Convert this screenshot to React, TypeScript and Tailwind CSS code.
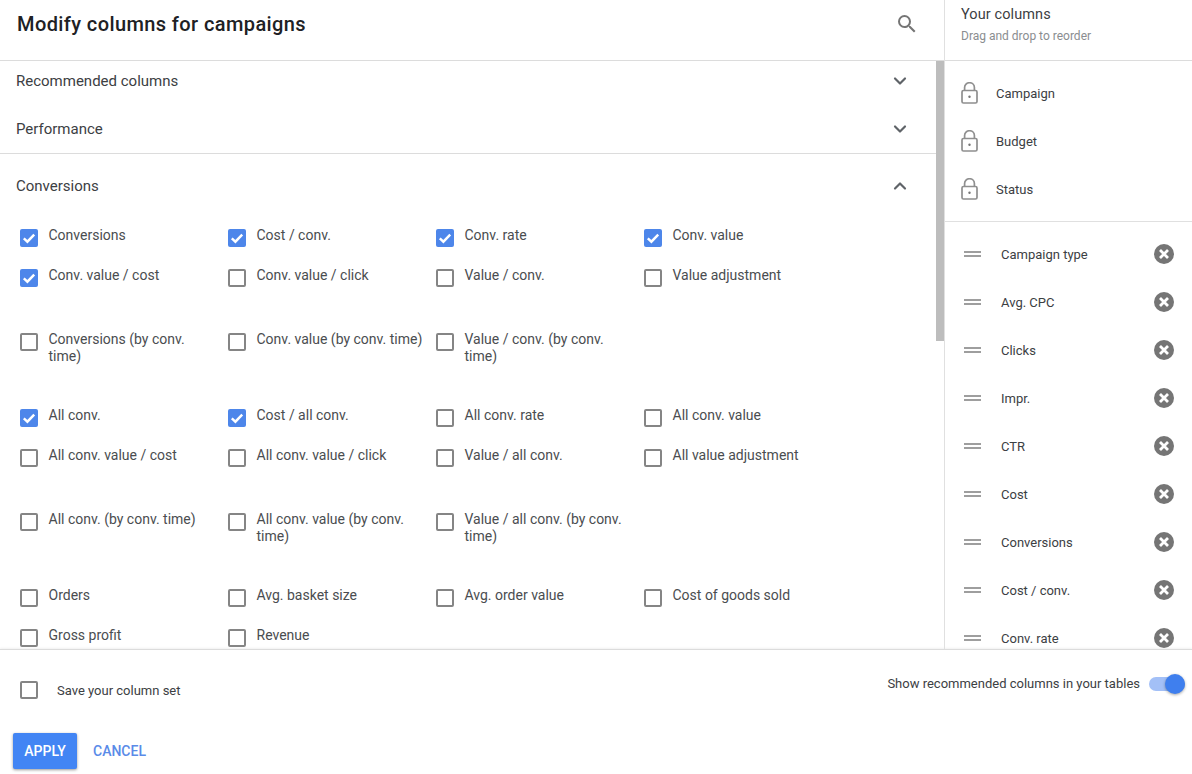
import { ChevronDown, ChevronUp } from 'lucide-react'

type Option = { label: string; checked?: boolean }
type Row = { height: string; options: Option[] }

const rows: Row[] = [
  { height: 'h-10', options: [{ label: 'Conversions', checked: true }, { label: 'Cost / conv.', checked: true }, { label: 'Conv. rate', checked: true }, { label: 'Conv. value', checked: true }] },
  { height: 'h-16', options: [{ label: 'Conv. value / cost', checked: true }, { label: 'Conv. value / click' }, { label: 'Value / conv.' }, { label: 'Value adjustment' }] },
  { height: 'h-[76px]', options: [{ label: 'Conversions (by conv. time)' }, { label: 'Conv. value (by conv. time)' }, { label: 'Value / conv. (by conv. time)' }] },
  { height: 'h-10', options: [{ label: 'All conv.', checked: true }, { label: 'Cost / all conv.', checked: true }, { label: 'All conv. rate' }, { label: 'All conv. value' }] },
  { height: 'h-16', options: [{ label: 'All conv. value / cost' }, { label: 'All conv. value / click' }, { label: 'Value / all conv.' }, { label: 'All value adjustment' }] },
  { height: 'h-[76px]', options: [{ label: 'All conv. (by conv. time)' }, { label: 'All conv. value (by conv. time)' }, { label: 'Value / all conv. (by conv. time)' }] },
  { height: 'h-10', options: [{ label: 'Orders' }, { label: 'Avg. basket size' }, { label: 'Avg. order value' }, { label: 'Cost of goods sold' }] },
  { height: 'h-10', options: [{ label: 'Gross profit' }, { label: 'Revenue' }] },
]

const locked = ['Campaign', 'Budget', 'Status']
const selected = ['Campaign type', 'Avg. CPC', 'Clicks', 'Impr.', 'CTR', 'Cost', 'Conversions', 'Cost / conv.', 'Conv. rate']

function Checkbox({ checked }: { checked?: boolean }) {
  if (checked) {
    return (
      <span className="flex h-[18px] w-[18px] shrink-0 items-center justify-center rounded-[2px] bg-[#4d86ea]">
        <svg viewBox="0 0 18 18" className="h-[18px] w-[18px]" fill="none" stroke="#fff" strokeWidth="2.4">
          <path d="M3.8 9.4l3.6 3.3L14.2 5.6" />
        </svg>
      </span>
    )
  }
  return <span className="block h-[18px] w-[18px] shrink-0 rounded-[2px] border-2 border-[#858585]" />
}

function LockIcon() {
  return (
    <svg viewBox="0 0 17 22" className="h-[22px] w-[17px]" fill="none" stroke="#8f8f8f" strokeWidth="1.7">
      <rect x="1" y="8.5" width="15" height="12.5" rx="1.5" />
      <path d="M3.6 8.5V5.6a4.9 4.9 0 0 1 9.8 0v2.9" />
      <circle cx="8.5" cy="14.8" r="1.2" fill="#757575" stroke="none" />
    </svg>
  )
}

function RemoveIcon() {
  return (
    <svg viewBox="0 0 20 20" className="h-5 w-5">
      <circle cx="10" cy="10" r="10" fill="#757575" />
      <path d="M6 6l8 8M14 6l-8 8" stroke="#fff" strokeWidth="2.8" />
    </svg>
  )
}

function SearchIcon() {
  return (
    <svg viewBox="0 0 24 24" className="h-6 w-6" fill="#757575">
      <path d="M15.5 14h-.79l-.28-.27A6.471 6.471 0 0 0 16 9.5 6.5 6.5 0 1 0 9.5 16c1.61 0 3.09-.59 4.23-1.57l.27.28v.79l5 4.99L20.49 19l-4.99-5zm-6 0C7.01 14 5 11.99 5 9.5S7.01 5 9.5 5 14 7.01 14 9.5 11.99 14 9.5 14z" />
    </svg>
  )
}

function SectionHeader({ label, open }: { label: string; open?: boolean }) {
  return (
    <div className="flex h-12 items-center justify-between pl-[16px] pr-[26px] text-[15px] text-[#3c4043]">
      <span>{label}</span>
      {open ? (
        <ChevronUp className="h-5 w-5 text-[#5f6368]" strokeWidth={2.6} />
      ) : (
        <ChevronDown className="h-5 w-5 text-[#5f6368]" strokeWidth={2.6} />
      )}
    </div>
  )
}

export default function App() {
  return (
    <div className="h-[774px] w-[1192px] overflow-hidden bg-white font-['Roboto',sans-serif] text-[#3c4043]">
      <div className="flex h-[649px]">
        {/* Column picker */}
        <div className="flex w-[944px] flex-col">
          <div className="flex h-[61px] shrink-0 items-center justify-between border-b border-[#dcdcdc] pb-[12px] pl-[17px] pr-[25px]">
            <h1 className="text-[20px] font-medium tracking-[0.4px] text-[#202124]">Modify columns for campaigns</h1>
            <SearchIcon />
          </div>
          <div className="flex min-h-0 flex-1">
            <div className="min-w-0 flex-1 overflow-hidden">
              <div className="-mt-1 border-b border-[#dcdcdc]">
                <SectionHeader label="Recommended columns" />
                <SectionHeader label="Performance" />
              </div>
              <div className="pt-[8px]">
                <SectionHeader label="Conversions" open />
                <div className="pl-[19.5px] pt-[16px]">
                  {rows.map((row, i) => (
                    <div key={i} className={`grid grid-cols-[208px_208px_208px_208px] ${row.height}`}>
                      {row.options.map((opt) => (
                        <div key={opt.label} className="flex gap-[11px]">
                          <span className="block pt-[3px]">
                            <Checkbox checked={opt.checked} />
                          </span>
                          <span className="w-[170px] pt-[1px] text-[14px] leading-[17px] text-[#4a4d50]">{opt.label}</span>
                        </div>
                      ))}
                    </div>
                  ))}
                </div>
              </div>
            </div>
            <div className="w-2 shrink-0">
              <div className="h-[280px] w-2 bg-[#bdbdbd]" />
            </div>
          </div>
        </div>

        {/* Your columns */}
        <div className="flex w-[248px] flex-col border-l border-[#e0e0e0]">
          <div className="h-[61px] shrink-0 border-b border-[#dcdcdc] pl-4 pt-[6px]">
            <div className="text-[14.5px] leading-[18px] tracking-[0.1px] text-[#3c4043]">Your columns</div>
            <div className="mt-[4px] text-[12px] leading-[16px] text-[#8a8d90]">Drag and drop to reorder</div>
          </div>
          <div className="min-h-0 flex-1 overflow-hidden">
            <div className="border-b border-[#e0e0e0] pb-2 pt-2">
              {locked.map((name) => (
                <div key={name} className="flex h-12 items-center pl-4 text-[13px]">
                  <LockIcon />
                  <span className="ml-[18px] mt-[2px]">{name}</span>
                </div>
              ))}
            </div>
            <div className="pt-2">
              {selected.map((name) => (
                <div key={name} className="flex h-12 items-center pl-[19px] pr-[18px] text-[13px]">
                  <span className="flex w-[17px] shrink-0 flex-col gap-[2px]">
                    <span className="h-[2px] bg-[#9e9e9e]" />
                    <span className="h-[2px] bg-[#9e9e9e]" />
                  </span>
                  <span className="ml-5 mt-[2px] flex-1">{name}</span>
                  <RemoveIcon />
                </div>
              ))}
            </div>
          </div>
        </div>
      </div>

      {/* Footer */}
      <div className="h-[125px] border-t border-[#dcdcdc] shadow-[0_-1px_2px_rgba(0,0,0,0.06)]">
        <div className="flex h-[80px] items-center justify-between pl-5 pr-[7px]">
          <div className="flex items-center text-[13px]">
            <Checkbox />
            <span className="ml-[19px] mt-[2px]">Save your column set</span>
          </div>
          <div className="mb-[12px] flex items-center text-[13px]">
            <span>Show recommended columns in your tables</span>
            <span className="relative ml-[9px] block h-[14px] w-[36px] rounded-full bg-[#a3c0f7]">
              <span className="absolute -top-[3px] right-0 h-5 w-5 rounded-full bg-[#3f7fee] shadow-[0_1px_3px_rgba(0,0,0,0.35)]" />
            </span>
          </div>
        </div>
        <div className="flex items-center pl-[13px] pt-[3px]">
          <button className="h-9 w-16 rounded-[2px] bg-[#4285f4] text-[14px] font-medium text-white shadow-[0_1px_3px_rgba(0,0,0,0.4)]">APPLY</button>
          <button className="ml-4 text-[14px] font-medium text-[#5a8be8]">CANCEL</button>
        </div>
      </div>
    </div>
  )
}
